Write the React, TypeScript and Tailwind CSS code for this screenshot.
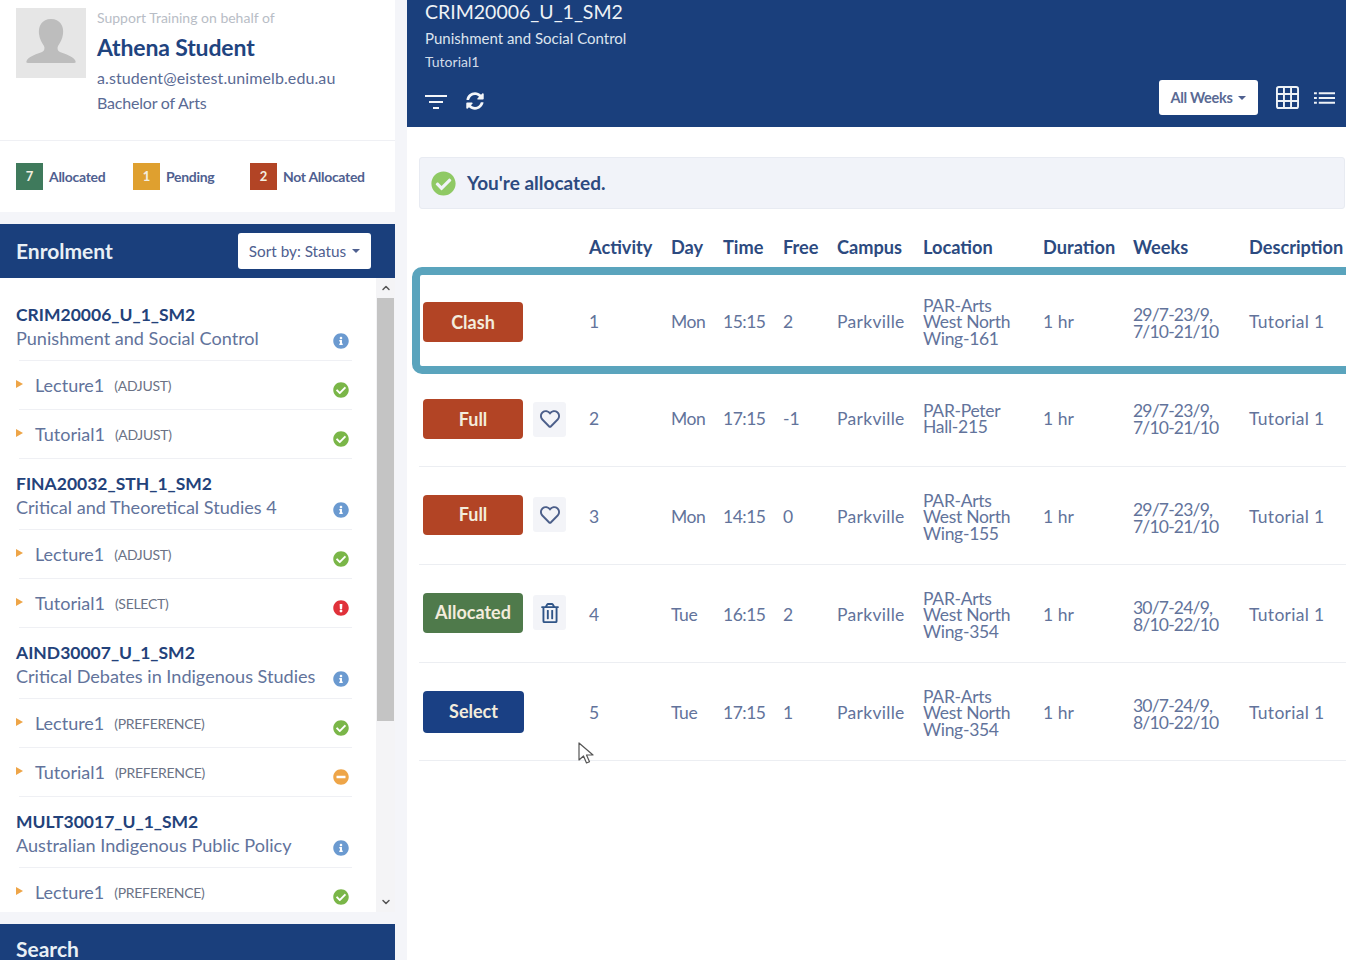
import { ReactNode } from "react";
import {
  FaCheckCircle,
  FaExclamationCircle,
  FaInfoCircle,
  FaMinusCircle,
  FaRegHeart,
  FaRegTrashAlt,
  FaSyncAlt,
} from "react-icons/fa";
import { ChevronDown, ChevronUp } from "lucide-react";

type Status = "ok" | "bad" | "wait";

type Course = {
  code: string;
  name: string;
  items: { label: string; tag: string; status: Status }[];
};

const courses: Course[] = [
  {
    code: "CRIM20006_U_1_SM2",
    name: "Punishment and Social Control",
    items: [
      { label: "Lecture1", tag: "(ADJUST)", status: "ok" },
      { label: "Tutorial1", tag: "(ADJUST)", status: "ok" },
    ],
  },
  {
    code: "FINA20032_STH_1_SM2",
    name: "Critical and Theoretical Studies 4",
    items: [
      { label: "Lecture1", tag: "(ADJUST)", status: "ok" },
      { label: "Tutorial1", tag: "(SELECT)", status: "bad" },
    ],
  },
  {
    code: "AIND30007_U_1_SM2",
    name: "Critical Debates in Indigenous Studies",
    items: [
      { label: "Lecture1", tag: "(PREFERENCE)", status: "ok" },
      { label: "Tutorial1", tag: "(PREFERENCE)", status: "wait" },
    ],
  },
  {
    code: "MULT30017_U_1_SM2",
    name: "Australian Indigenous Public Policy",
    items: [{ label: "Lecture1", tag: "(PREFERENCE)", status: "ok" }],
  },
];

type Row = {
  action: string;
  color: string;
  side?: "heart" | "trash";
  activity: string;
  day: string;
  time: string;
  free: string;
  location: string;
  weeks: string;
  height: string;
  offset: string;
};

const rows: Row[] = [
  {
    action: "Full",
    color: "bg-[#b24425]",
    side: "heart",
    activity: "2",
    day: "Mon",
    time: "17:15",
    free: "-1",
    location: "PAR-Peter Hall-215",
    weeks: "29/7-23/9, 7/10-21/10",
    height: "h-[93px] pb-[2px]",
    offset: "mt-0",
  },
  {
    action: "Full",
    color: "bg-[#b24425]",
    side: "heart",
    activity: "3",
    day: "Mon",
    time: "14:15",
    free: "0",
    location: "PAR-Arts West North Wing-155",
    weeks: "29/7-23/9, 7/10-21/10",
    height: "h-[98px] pb-[2px]",
    offset: "mt-[6px]",
  },
  {
    action: "Allocated",
    color: "bg-[#4f7a4b]",
    side: "trash",
    activity: "4",
    day: "Tue",
    time: "16:15",
    free: "2",
    location: "PAR-Arts West North Wing-354",
    weeks: "30/7-24/9, 8/10-22/10",
    height: "h-[98px] pb-[2px]",
    offset: "mt-[6px]",
  },
  {
    action: "Select",
    color: "bg-[#1a4084]",
    activity: "5",
    day: "Tue",
    time: "17:15",
    free: "1",
    location: "PAR-Arts West North Wing-354",
    weeks: "30/7-24/9, 8/10-22/10",
    height: "h-[98px] pb-[2px]",
    offset: "mt-[6px]",
  },
];

function StatusIcon({ status }: { status: Status }) {
  if (status === "bad") return <FaExclamationCircle className="mt-[9px] size-4 text-[#e0313a]" />;
  if (status === "wait") return <FaMinusCircle className="mt-[9px] size-4 text-[#eea548]" />;
  return <FaCheckCircle className="mt-[9px] size-4 text-[#7ab648]" />;
}

function Legend({ n, color, label }: { n: string; color: string; label: string }) {
  return (
    <div className="flex w-[117px] items-center gap-[6px] whitespace-nowrap">
      <span
        className={`flex size-[27px] shrink-0 items-center justify-center text-[13px] font-bold text-[#f4efe0] ${color}`}
      >
        {n}
      </span>
      <span className="text-[14px] font-bold tracking-[-0.3px] text-[#4f6090]">{label}</span>
    </div>
  );
}

function Caret() {
  return <span className="ml-[6px] inline-block border-x-[4px] border-t-[4px] border-x-transparent border-t-[#4f6090]" />;
}

function Profile() {
  return (
    <div className="flex h-[141px] shrink-0 gap-[11px] border-b border-[#eff0f4] pl-4 pt-2">
      <div className="flex size-[70px] items-center justify-center bg-[#e6e6e6]">
        <svg viewBox="0 0 70 70" className="size-[70px]">
          <path
            d="M35 11c-9 0-13 7-12 15 .5 5 3 9 5 12 1 2 .5 5-2 6-5 2-12 4-15 8-1 2-1 3 1 3h46c2 0 2-1 1-3-3-4-10-6-15-8-2.5-1-3-4-2-6 2-3 4.5-7 5-12 1-8-3-15-12-15z"
            fill="#bdbdbd"
          />
        </svg>
      </div>
      <div className="flex flex-col">
        <span className="text-[14px] leading-5 text-[#b8bdc6]">Support Training on behalf of</span>
        <span className="mt-[3px] text-[23px] font-bold leading-8 tracking-[-0.15px] text-[#1f447f]">Athena Student</span>
        <span className="mt-[3px] text-[16px] leading-6 tracking-[0.1px] text-[#5a6a94]">a.student@eistest.unimelb.edu.au</span>
        <span className="mt-[1px] text-[16px] leading-6 tracking-[-0.2px] text-[#5a6a94]">Bachelor of Arts</span>
      </div>
    </div>
  );
}

function CourseBlock({ course }: { course: Course }) {
  return (
    <div>
      <div className="ml-[19px] mr-[24px] flex h-[71px] items-end justify-between border-b border-[#eff0f4] pb-[10px] pr-[3px]">
        <div className="-ml-[3px] flex flex-col whitespace-nowrap">
          <span className="text-[17.5px] font-bold leading-6 text-[#23427a]">{course.code}</span>
          <span className="-mt-[1px] text-[18.1px] leading-6 text-[#62739b]">{course.name}</span>
        </div>
        <FaInfoCircle className="mb-[1px] size-4 shrink-0 text-[#6b9ad0]" />
      </div>
      {course.items.map((item) => (
        <div
          key={item.label}
          className="ml-[19px] mr-[24px] flex h-[49px] items-center justify-between border-b border-[#eff0f4] pr-[3px]"
        >
          <div className="relative flex items-center gap-[10px] pl-4 pt-[1px]">
            <span className="absolute -left-[3px] top-[9px] border-y-[4px] border-l-[7px] border-y-transparent border-l-[#eea548]" />
            <span className="text-[18px] text-[#62739b]">{item.label}</span>
            <span className="text-[14px] tracking-[-0.3px] text-[#6b7285]">{item.tag}</span>
          </div>
          <StatusIcon status={item.status} />
        </div>
      ))}
    </div>
  );
}

function Sidebar() {
  return (
    <aside className="flex h-[960px] w-[395px] shrink-0 flex-col bg-white">
      <Profile />
      <div className="flex h-[71px] shrink-0 items-center pl-4">
        <Legend n="7" color="bg-[#3f7a5c]" label="Allocated" />
        <Legend n="1" color="bg-[#dfa02f]" label="Pending" />
        <Legend n="2" color="bg-[#b24425]" label="Not Allocated" />
      </div>
      <div className="h-3 shrink-0 bg-[#f4f5f9]" />
      <div className="flex h-[54px] shrink-0 items-center justify-between bg-[#1a3f7c] pl-4 pr-6">
        <span className="text-[21px] font-bold text-[#e9f0f5]">Enrolment</span>
        <div className="flex h-9 w-[133px] items-center justify-center rounded-[3px] bg-white text-[15.3px] text-[#4f6090]">
          Sort by: Status
          <Caret />
        </div>
      </div>
      <div className="flex h-[634px] shrink-0 overflow-hidden">
        <div className="min-w-0 flex-1 overflow-hidden pt-3">
          {courses.map((course) => (
            <CourseBlock key={course.code} course={course} />
          ))}
        </div>
        <div className="flex w-[19px] shrink-0 flex-col items-center bg-[#f4f4f6]">
          <ChevronUp className="h-[20px] w-3 shrink-0 text-[#555]" strokeWidth={3} />
          <div className="h-[423px] w-[17px] shrink-0 bg-[#c4c4c4]" />
          <div className="flex-1" />
          <ChevronDown className="h-[20px] w-3 shrink-0 text-[#555]" strokeWidth={3} />
        </div>
      </div>
      <div className="h-3 shrink-0 bg-[#f4f5f9]" />
      <div className="h-9 shrink-0 overflow-hidden bg-[#1a3f7c] pl-4 pt-[11px]">
        <span className="text-[21px] font-bold leading-7 text-[#e9f0f5]">Search</span>
      </div>
    </aside>
  );
}

function ActionButton({ label, color, wide }: { label: string; color: string; wide?: boolean }) {
  return (
    <div
      className={`flex shrink-0 items-center justify-center rounded-[4px] text-[18px] font-bold text-[#f3ecdc] ${color} ${
        wide ? "mt-[2px] h-[42px] w-[101px]" : "h-10 w-[100px]"
      }`}
    >
      {label}
    </div>
  );
}

function Cell({ className, children }: { className: string; children: ReactNode }) {
  return <div className={`shrink-0 ${className}`}>{children}</div>;
}

function RowCells({ row }: { row: Pick<Row, "activity" | "day" | "time" | "free" | "location" | "weeks" | "offset"> }) {
  return (
    <div className={`flex items-center ${row.offset}`}>
      <Cell className="w-[82px]">{row.activity}</Cell>
      <Cell className="w-[52px] tracking-[-0.4px]">{row.day}</Cell>
      <Cell className="w-[60px] tracking-[-0.5px]">{row.time}</Cell>
      <Cell className="w-[54px]">{row.free}</Cell>
      <Cell className="w-[86px] tracking-[0.3px]">Parkville</Cell>
      <Cell className="w-[120px]">
        <div className="w-[96px] whitespace-normal leading-[16.5px] tracking-[-0.3px]">{row.location}</div>
      </Cell>
      <Cell className="w-[90px]">1 hr</Cell>
      <Cell className="w-[116px]">
        <div className="w-[96px] whitespace-normal leading-[17px] tracking-[-0.8px]">{row.weeks}</div>
      </Cell>
      <Cell className="w-[100px] tracking-[0.3px]">Tutorial 1</Cell>
    </div>
  );
}

function TopBar() {
  return (
    <header className="flex h-[127px] shrink-0 flex-col bg-[#1a3f7c] pl-[18px] pr-[11px]">
      <div className="-mt-[2px] text-[19.5px] leading-7 text-[#eef2f6]">CRIM20006_U_1_SM2</div>
      <div className="text-[15px] leading-6 text-[#dde4ee]">Punishment and Social Control</div>
      <div className="text-[14px] leading-6 text-[#d3dce9]">Tutorial1</div>
      <div className="mt-[6px] flex items-start justify-between">
        <div className="mt-[11px] flex items-center gap-[19px]">
          <svg viewBox="0 0 22 16" className="mt-[3px] h-4 w-[22px]" fill="none" stroke="#f4f6f9" strokeWidth="2">
            <path d="M0 2h22M4 8h14M8 14h6" />
          </svg>
          <FaSyncAlt className="size-[18px] text-[#f4f6f9]" />
        </div>
        <div className="flex items-center">
          <div className="flex h-[35px] w-[99px] items-center justify-center rounded-[3px] bg-white text-[14.5px] font-bold tracking-[-0.3px] text-[#5a6a94]">
            All Weeks
            <Caret />
          </div>
          <svg viewBox="0 0 24 24" className="ml-[18px] size-[23px]" fill="none" stroke="#eef2f6" strokeWidth="2">
            <rect x="1" y="1" width="22" height="22" rx="2" />
            <path d="M8.3 1v22M15.7 1v22M1 8.3h22M1 15.7h22" />
          </svg>
          <svg viewBox="0 0 22 14" className="ml-[15px] h-[14px] w-[21px]" fill="none" stroke="#eef2f6" strokeWidth="2">
            <path d="M5 2h17M5 7h17M5 12h17M0 2h3M0 7h3M0 12h3" />
          </svg>
        </div>
      </div>
    </header>
  );
}

function Cursor() {
  return (
    <svg viewBox="0 0 18 24" className="absolute left-[171px] top-[742px] h-6 w-[18px]">
      <path d="M1 1v17l4.5-4 3 7 3-1.3-3-6.7h6.5z" fill="#fff" stroke="#555" strokeWidth="1.2" strokeLinejoin="round" />
    </svg>
  );
}

export default function App() {
  return (
    <div
      className="flex h-[960px] w-[1346px] overflow-hidden bg-[#f4f5f9] text-[#62739b]"
      style={{ fontFamily: "Lato, 'Noto Sans', sans-serif" }}
    >
      <Sidebar />
      <div className="w-3 shrink-0" />
      <main className="relative flex min-w-0 flex-1 flex-col bg-white">
        <TopBar />
        <div className="ml-3 mr-[1px] mt-[30px] flex h-[52px] shrink-0 items-center gap-[11px] rounded-[3px] border border-[#e8ebf2] bg-[#f1f3f9] pl-[11px]">
          <FaCheckCircle className="size-[25px] text-[#8fc964]" />
          <span className="text-[19px] font-bold text-[#2c4a80]">You're allocated.</span>
        </div>
        <div className="ml-[182px] mt-[25px] flex h-[28px] shrink-0 items-center whitespace-nowrap text-[18.2px] font-bold text-[#2c4a80]">
          <Cell className="w-[82px]">Activity</Cell>
          <Cell className="w-[52px]">Day</Cell>
          <Cell className="w-[60px]">Time</Cell>
          <Cell className="w-[54px]">Free</Cell>
          <Cell className="w-[86px]">Campus</Cell>
          <Cell className="w-[120px]">Location</Cell>
          <Cell className="w-[90px]">Duration</Cell>
          <Cell className="w-[116px]">Weeks</Cell>
          <Cell className="w-[100px]">Description</Cell>
        </div>
        <div className="ml-[5px] mt-[5px] flex h-[107px] w-[960px] shrink-0 items-center whitespace-nowrap rounded-[10px] border-[8px] border-[#5aa4bd] pl-[3px] pt-[3px] text-[17.5px]">
          <ActionButton label="Clash" color="bg-[#b24425]" />
          <div className="w-[66px] shrink-0" />
          <RowCells
            row={{
              activity: "1",
              day: "Mon",
              time: "15:15",
              free: "2",
              location: "PAR-Arts West North Wing-161",
              weeks: "29/7-23/9, 7/10-21/10",
              offset: "mt-[1px]",
            }}
          />
        </div>
        {rows.map((row) => (
          <div
            key={row.activity}
            className={`ml-3 flex shrink-0 items-center whitespace-nowrap border-b border-[#eceef2] pl-1 text-[17.5px] ${row.height}`}
          >
            <ActionButton label={row.action} color={row.color} wide={row.action === "Select"} />
            <div className={`flex shrink-0 justify-start pl-[10px] ${row.action === "Select" ? "w-[65px]" : "w-[66px]"}`}>
              {row.side && (
                <div className="flex h-[35px] w-[33px] items-center justify-center rounded-[3px] bg-[#f3f4f8]">
                  {row.side === "heart" ? (
                    <FaRegHeart className="size-5 text-[#4c5f8a]" />
                  ) : (
                    <FaRegTrashAlt className="size-5 text-[#2f5487]" />
                  )}
                </div>
              )}
            </div>
            <RowCells row={row} />
          </div>
        ))}
        <Cursor />
      </main>
    </div>
  );
}
